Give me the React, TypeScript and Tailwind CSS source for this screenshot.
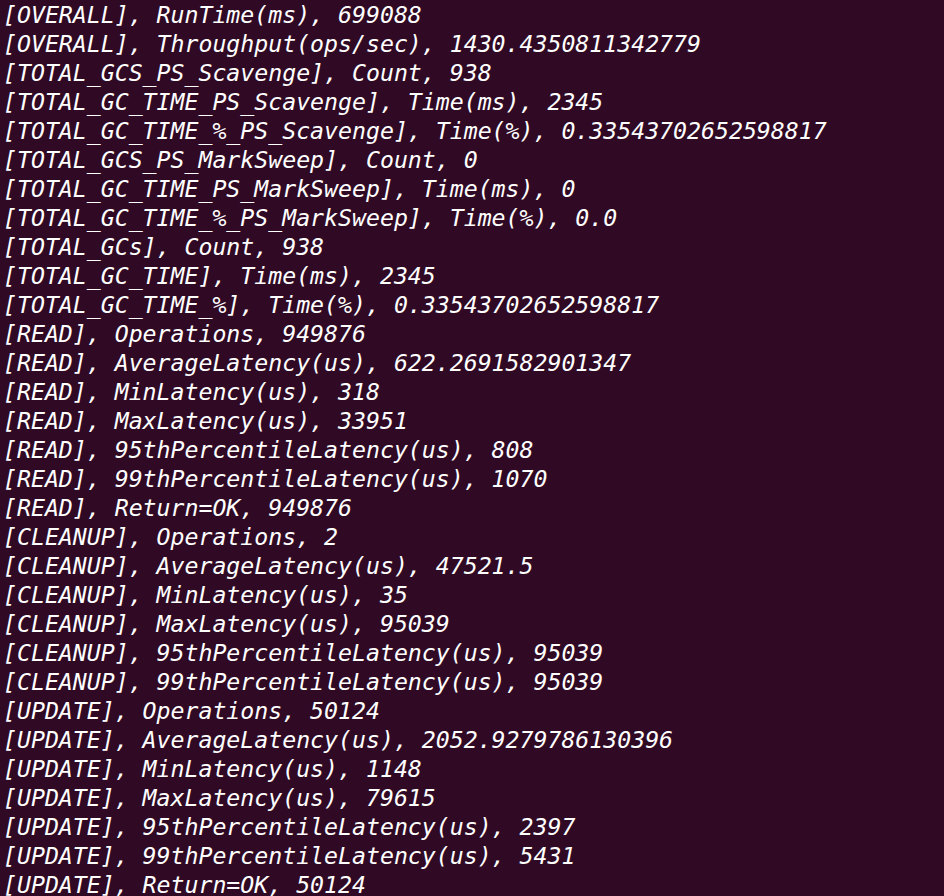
const lines = [
  "[OVERALL], RunTime(ms), 699088",
  "[OVERALL], Throughput(ops/sec), 1430.4350811342779",
  "[TOTAL_GCS_PS_Scavenge], Count, 938",
  "[TOTAL_GC_TIME_PS_Scavenge], Time(ms), 2345",
  "[TOTAL_GC_TIME_%_PS_Scavenge], Time(%), 0.33543702652598817",
  "[TOTAL_GCS_PS_MarkSweep], Count, 0",
  "[TOTAL_GC_TIME_PS_MarkSweep], Time(ms), 0",
  "[TOTAL_GC_TIME_%_PS_MarkSweep], Time(%), 0.0",
  "[TOTAL_GCs], Count, 938",
  "[TOTAL_GC_TIME], Time(ms), 2345",
  "[TOTAL_GC_TIME_%], Time(%), 0.33543702652598817",
  "[READ], Operations, 949876",
  "[READ], AverageLatency(us), 622.2691582901347",
  "[READ], MinLatency(us), 318",
  "[READ], MaxLatency(us), 33951",
  "[READ], 95thPercentileLatency(us), 808",
  "[READ], 99thPercentileLatency(us), 1070",
  "[READ], Return=OK, 949876",
  "[CLEANUP], Operations, 2",
  "[CLEANUP], AverageLatency(us), 47521.5",
  "[CLEANUP], MinLatency(us), 35",
  "[CLEANUP], MaxLatency(us), 95039",
  "[CLEANUP], 95thPercentileLatency(us), 95039",
  "[CLEANUP], 99thPercentileLatency(us), 95039",
  "[UPDATE], Operations, 50124",
  "[UPDATE], AverageLatency(us), 2052.9279786130396",
  "[UPDATE], MinLatency(us), 1148",
  "[UPDATE], MaxLatency(us), 79615",
  "[UPDATE], 95thPercentileLatency(us), 2397",
  "[UPDATE], 99thPercentileLatency(us), 5431",
  "[UPDATE], Return=OK, 50124",
];

export default function App() {
  return (
    <div className="w-[944px] h-[896px] overflow-hidden bg-[#300a24]">
      <pre className="pl-[3px] pt-0 italic text-[23.2px] leading-[29px] text-white font-['DejaVu_Sans_Mono',monospace]">
        {lines.map((line, i) => (
          <div key={i}>{line}</div>
        ))}
      </pre>
    </div>
  );
}
